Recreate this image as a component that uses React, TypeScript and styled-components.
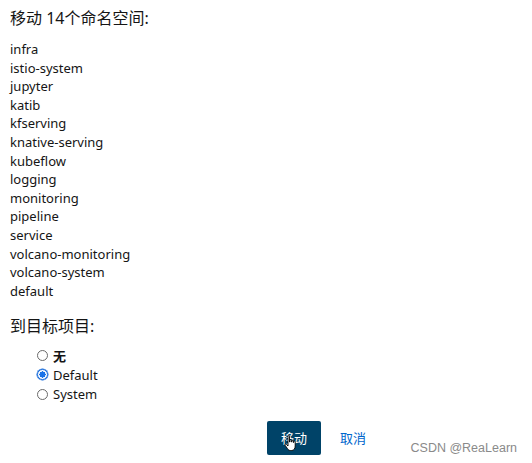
import styled, { createGlobalStyle } from "styled-components";

const GlobalStyle = createGlobalStyle`
  html, body {
    margin: 0;
    padding: 0;
    background: #ffffff;
  }
  body {
    font-family: "Noto Sans", "Noto Sans CJK SC", sans-serif;
    color: #151515;
  }
`;

const namespaces = [
  "infra",
  "istio-system",
  "jupyter",
  "katib",
  "kfserving",
  "knative-serving",
  "kubeflow",
  "logging",
  "monitoring",
  "pipeline",
  "service",
  "volcano-monitoring",
  "volcano-system",
  "default",
];

const projects = [
  { label: "无", checked: false, bold: true },
  { label: "Default", checked: true, bold: false },
  { label: "System", checked: false, bold: false },
];

const Page = styled.div`
  position: relative;
  width: 532px;
  height: 463px;
  box-sizing: border-box;
  padding: 8px 10px 0;
  display: flex;
  flex-direction: column;
`;

const Heading = styled.h2`
  margin: 0;
  font-size: 16px;
  font-weight: 400;
  line-height: 20px;
`;

const List = styled.ul`
  list-style: none;
  margin: 12px 0 0;
  padding: 0;
  font-size: 13px;
  line-height: 18.6px;
`;

const Section = styled.div`
  margin-top: 16px;
`;

const RadioGroup = styled.div`
  margin: 9px 0 0 27px;
  display: flex;
  flex-direction: column;
`;

const RadioRow = styled.label<{ $bold: boolean }>`
  display: flex;
  align-items: center;
  gap: 5px;
  height: 19.5px;
  font-size: 13px;
  font-weight: ${(p) => (p.$bold ? 700 : 400)};
`;

const Radio = styled.span<{ $checked: boolean }>`
  width: 11px;
  height: 11px;
  box-sizing: border-box;
  border-radius: 50%;
  border: 1px solid ${(p) => (p.$checked ? "#0b63d8" : "#6a6a6a")};
  background: ${(p) =>
    p.$checked ? "radial-gradient(circle, #1a73e8 0 3px, #ffffff 3.2px)" : "#fff"};
  box-shadow: ${(p) => (p.$checked ? "0 0 0 0.5px #0b63d8" : "none")};
`;

const Actions = styled.div`
  margin-top: 17px;
  margin-left: 257px;
  display: flex;
  align-items: center;
  gap: 19px;
`;

const PrimaryButton = styled.button`
  position: relative;
  width: 54px;
  height: 34px;
  border: none;
  border-radius: 2px;
  background: #004368;
  color: #ffffff;
  font-family: "Noto Sans", "Noto Sans CJK SC", sans-serif;
  font-size: 13px;
  padding: 0;
`;

const LinkButton = styled.button`
  border: none;
  background: none;
  padding: 0;
  color: #0066cc;
  font-family: "Noto Sans", "Noto Sans CJK SC", sans-serif;
  font-size: 13px;
`;

const Cursor = styled.svg`
  position: absolute;
  left: 17px;
  top: 14px;
`;

const Watermark = styled.div`
  position: absolute;
  right: 15px;
  bottom: 8px;
  font-family: "Liberation Sans", Arial, sans-serif;
  font-size: 12.5px;
  color: #8a8a8a;
`;

function HandCursor() {
  return (
    <Cursor width="14" height="17" viewBox="0 0 14 17">
      <path
        d="M4 1.2c0-.7 1.5-.7 1.5 0V7h.4V5.2c0-.7 1.5-.7 1.5 0V7h.4V5.8c0-.7 1.5-.7 1.5 0V7.5h.4V6.6c0-.7 1.5-.7 1.5 0V11c0 2.5-1.3 4.5-3.5 4.5H6.4c-1.4 0-2.2-.8-3-2L1 10.2c-.4-.7.6-1.5 1.3-.9L4 11V1.2z"
        fill="#ffffff"
        stroke="#000000"
        strokeWidth="0.9"
        strokeLinejoin="round"
      />
    </Cursor>
  );
}

export default function App() {
  return (
    <Page>
      <GlobalStyle />
      <Heading>移动 14个命名空间:</Heading>
      <List>
        {namespaces.map((ns) => (
          <li key={ns}>{ns}</li>
        ))}
      </List>
      <Section>
        <Heading>到目标项目:</Heading>
        <RadioGroup>
          {projects.map((p) => (
            <RadioRow key={p.label} $bold={p.bold}>
              <Radio $checked={p.checked} />
              {p.label}
            </RadioRow>
          ))}
        </RadioGroup>
      </Section>
      <Actions>
        <PrimaryButton>
          移动
          <HandCursor />
        </PrimaryButton>
        <LinkButton>取消</LinkButton>
      </Actions>
      <Watermark>CSDN @ReaLearn</Watermark>
    </Page>
  );
}
